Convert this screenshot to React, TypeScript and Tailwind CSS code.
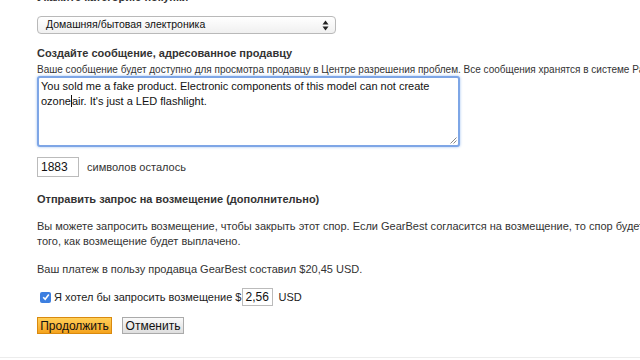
export default function App() {
  return (
    <div className="relative h-[360px] w-[640px] overflow-hidden bg-white font-['Liberation_Sans',Arial,sans-serif] text-[#222]">
      <div className="pl-[37px]">
        <div className="-mt-[10px] h-[13px] whitespace-nowrap text-[11px] font-bold leading-[14px] text-[#333]">Укажите категорию покупки</div>

        <div className="mt-[13px] flex h-[18px] w-[299px] items-center justify-between rounded-[4px] border border-[#b9b9b9] bg-gradient-to-b from-white to-[#f0f0f0] pl-[8px] pr-[6px] text-[10.5px] text-[#111]">
          <span>Домашняя/бытовая электроника</span>
          <svg width="7" height="11" viewBox="0 0 7 11">
            <path d="M3.5 0.5 L6.5 4.5 H0.5 Z" fill="#222" />
            <path d="M3.5 10.5 L6.5 6.5 H0.5 Z" fill="#222" />
          </svg>
        </div>

        <div className="mt-[11px] text-[11px] font-bold leading-[16px] text-[#333]">Создайте сообщение, адресованное продавцу</div>
        <div className="mt-[2px] whitespace-nowrap text-[10px] leading-[13px] text-[#333]">
          Ваше сообщение будет доступно для просмотра продавцу в Центре разрешения проблем. Все сообщения хранятся в системе PayPal
        </div>

        <div className="relative h-[71px] w-[423px] rounded-[3px] border-2 border-[#7ea6e6] bg-white px-[2px] pt-[2px] text-[11px] leading-[13px] text-[#111] shadow-[0_0_3px_#9fc0f0]">
          <div className="whitespace-nowrap">You sold me a fake product. Electronic components of this model can not create</div>
          <div className="whitespace-nowrap">
            ozone<span className="inline-block h-[12px] w-px translate-y-[2px] bg-[#111]" />air. It's just a LED flashlight.
          </div>
          <svg className="absolute bottom-[1px] right-[1px]" width="7" height="7" viewBox="0 0 7 7">
            <path d="M6.5 0.5 L0.5 6.5 M6.5 3.5 L3.5 6.5" stroke="#888" strokeWidth="1" />
          </svg>
        </div>

        <div className="mt-[10px] flex items-center gap-[8px]">
          <div className="flex h-[20px] w-[42px] items-center border border-[#bbb] pl-[3px] text-[12px] text-[#111]">1883</div>
          <span className="text-[11px] text-[#333]">символов осталось</span>
        </div>

        <div className="mt-[15px] text-[11px] font-bold leading-[14px] text-[#333]">Отправить запрос на возмещение (дополнительно)</div>

        <div className="mt-[13px] whitespace-nowrap text-[11px] leading-[15px] text-[#333]">
          <div>Вы можете запросить возмещение, чтобы закрыть этот спор. Если GearBest согласится на возмещение, то спор будет закрыт после</div>
          <div>того, как возмещение будет выплачено.</div>
        </div>

        <div className="mt-[13px] text-[11px] leading-[14px] text-[#333]">Ваш платеж в пользу продавца GearBest составил $20,45 USD.</div>

        <div className="mt-[12px] flex items-center text-[11px] text-[#222]">
          <span className="ml-[3px] mr-[3px] flex h-[11px] w-[11px] items-center justify-center rounded-[2px] bg-[#3d7fe0]">
            <svg width="8" height="8" viewBox="0 0 8 8">
              <path d="M1.2 4.2 L3.2 6.2 L6.8 1.6" fill="none" stroke="white" strokeWidth="1.6" />
            </svg>
          </span>
          <span>Я хотел бы запросить возмещение $</span>
          <div className="ml-[1px] flex h-[18px] w-[31px] items-center border border-[#bbb] pl-[2px] text-[12px] text-[#111]">2,56</div>
          <span className="ml-[5px]">USD</span>
        </div>

        <div className="mt-[11px] flex items-center gap-[10px] text-[12px]">
          <div className="flex h-[17px] w-[75px] items-center justify-center border border-[#d98a0f] bg-gradient-to-b from-[#ffcf56] to-[#f5a31b] text-[#111]">Продолжить</div>
          <div className="flex h-[17px] w-[62px] items-center justify-center border border-[#aaa] bg-gradient-to-b from-[#fafafa] to-[#dedede] text-[#111]">Отменить</div>
        </div>
      </div>
      <div className="absolute bottom-[2px] left-0 h-px w-full bg-[#ececec]" />
    </div>
  );
}
